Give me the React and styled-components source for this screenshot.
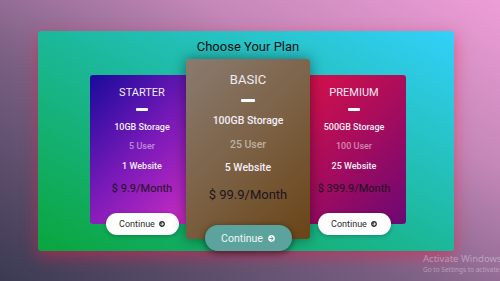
import React from "react";
import styled, { createGlobalStyle } from "styled-components";
import { FaArrowCircleRight } from "react-icons/fa";

const Global = createGlobalStyle`
  html, body { margin: 0; padding: 0; }
  body { font-family: Roboto, "Liberation Sans", sans-serif; }
`;

const Page = styled.div`
  position: relative;
  width: 500px;
  height: 281px;
  overflow: hidden;
  box-sizing: border-box;
  padding: 31px 0 0 38px;
  background: linear-gradient(to top right, #3b3a52 0%, #7a5f82 40%, #c487b8 70%, #ee9dd6 100%);
`;

const Panel = styled.div`
  width: 416px;
  height: 220px;
  box-sizing: border-box;
  padding: 8px 0 0 4px;
  border-radius: 3px;
  background: linear-gradient(to top right, #0aa53c 0%, #1cb89a 50%, #33d0fb 100%);
  box-shadow: 0 5px 16px rgba(225, 30, 70, 0.55);
  display: flex;
  flex-direction: column;
  align-items: center;
`;

const Title = styled.h1`
  margin: 0;
  font-size: 13px;
  font-weight: 400;
  line-height: 16px;
  color: #111;
`;

const Row = styled.div`
  margin-top: 4px;
  display: flex;
  align-items: center;
  justify-content: center;
  height: 180px;
`;

const Card = styled.div`
  width: ${(p) => (p.$featured ? 124 : 104)}px;
  height: ${(p) => (p.$featured ? 180 : 149)}px;
  margin: 0 ${(p) => (p.$featured ? -8 : 0)}px;
  box-sizing: border-box;
  padding-top: ${(p) => (p.$featured ? 13 : 11)}px;
  border-radius: 3px;
  background: ${(p) => p.$bg};
  display: flex;
  flex-direction: column;
  align-items: center;
  position: relative;
  z-index: ${(p) => (p.$featured ? 2 : 1)};
  box-shadow: ${(p) =>
    p.$featured ? "0 0 14px rgba(0, 0, 0, 0.45)" : "none"};
`;

const PlanName = styled.div`
  font-size: ${(p) => (p.$featured ? 13 : 11)}px;
  line-height: ${(p) => (p.$featured ? 16 : 14)}px;
  color: #f1e9f4;
`;

const Dash = styled.div`
  width: ${(p) => (p.$featured ? 14 : 12)}px;
  height: 3px;
  margin-top: ${(p) => (p.$featured ? 11 : 8)}px;
  border-radius: 1px;
  background: #fff;
`;

const Feature = styled.div`
  font-size: ${(p) => (p.$featured ? 10.5 : 9)}px;
  line-height: ${(p) => (p.$featured ? 14 : 12)}px;
  font-weight: 500;
  margin-top: ${(p) => p.$mt}px;
  color: ${(p) => (p.$muted ? "rgba(255,255,255,0.5)" : "#f4eef6")};
`;

const Price = styled.div`
  font-size: ${(p) => (p.$featured ? 13 : 11)}px;
  line-height: ${(p) => (p.$featured ? 16 : 14)}px;
  margin-top: ${(p) => (p.$featured ? 11.7 : 10.3)}px;
  color: #1d1420;
`;

const Button = styled.button`
  margin-top: auto;
  margin-bottom: ${(p) => (p.$featured ? -12 : -11)}px;
  width: ${(p) => (p.$featured ? 87 : 73)}px;
  height: ${(p) => (p.$featured ? 26 : 22)}px;
  border: none;
  border-radius: 13px;
  padding: 0;
  display: flex;
  align-items: center;
  justify-content: center;
  gap: ${(p) => (p.$featured ? 5 : 4)}px;
  font-family: Roboto, "Liberation Sans", sans-serif;
  font-size: ${(p) => (p.$featured ? 10.5 : 9)}px;
  background: ${(p) => (p.$featured ? "#5ca39d" : "#ffffff")};
  color: ${(p) => (p.$featured ? "#f2f6f6" : "#2a2a2a")};
  box-shadow: ${(p) =>
    p.$featured
      ? "0 2px 7px rgba(0,0,0,0.55)"
      : "0 1px 4px rgba(0,0,0,0.25)"};
  svg {
    width: ${(p) => (p.$featured ? 7 : 6)}px;
    height: ${(p) => (p.$featured ? 7 : 6)}px;
    color: ${(p) => (p.$featured ? "#ffffff" : "#2a2a2a")};
  }
`;

const Watermark = styled.div`
  position: absolute;
  left: 423px;
  top: 252px;
  white-space: nowrap;
  font-family: "Noto Sans", "DejaVu Sans", sans-serif;
  color: rgba(235, 225, 240, 0.45);
`;

const WmTitle = styled.div`
  font-size: 9.5px;
  line-height: 14px;
`;

const WmSub = styled.div`
  font-size: 6.5px;
  line-height: 8px;
`;

const plans = [
  {
    name: "STARTER",
    bg: "linear-gradient(135deg, #1a0a9c 0%, #7a1ab8 50%, #d02dc4 100%)",
    storage: "10GB Storage",
    users: "5 User",
    sites: "1 Website",
    price: "$ 9.9/Month",
  },
  {
    name: "BASIC",
    featured: true,
    bg: "linear-gradient(135deg, #8a7b70 0%, #7a5e40 55%, #6a4416 100%)",
    storage: "100GB Storage",
    users: "25 User",
    sites: "5 Website",
    price: "$ 99.9/Month",
  },
  {
    name: "PREMIUM",
    bg: "linear-gradient(135deg, #d8114a 0%, #a40c5e 50%, #6c0874 100%)",
    storage: "500GB Storage",
    users: "100 User",
    sites: "25 Website",
    price: "$ 399.9/Month",
  },
];

export default function App() {
  return (
    <>
      <Global />
      <Page>
        <Panel>
          <Title>Choose Your Plan</Title>
          <Row>
            {plans.map((p) => {
              const f = !!p.featured;
              return (
                <Card key={p.name} $featured={f} $bg={p.bg}>
                  <PlanName $featured={f}>{p.name}</PlanName>
                  <Dash $featured={f} />
                  <Feature $featured={f} $mt={f ? 12.3 : 10}>
                    {p.storage}
                  </Feature>
                  <Feature $featured={f} $mt={f ? 10 : 7.5} $muted>
                    {p.users}
                  </Feature>
                  <Feature $featured={f} $mt={f ? 9 : 7.5}>
                    {p.sites}
                  </Feature>
                  <Price $featured={f}>{p.price}</Price>
                  <Button $featured={f}>
                    <span>Continue</span>
                    <FaArrowCircleRight />
                  </Button>
                </Card>
              );
            })}
          </Row>
        </Panel>
        <Watermark>
          <WmTitle>Activate Windows</WmTitle>
          <WmSub>Go to Settings to activate Windows.</WmSub>
        </Watermark>
      </Page>
    </>
  );
}
